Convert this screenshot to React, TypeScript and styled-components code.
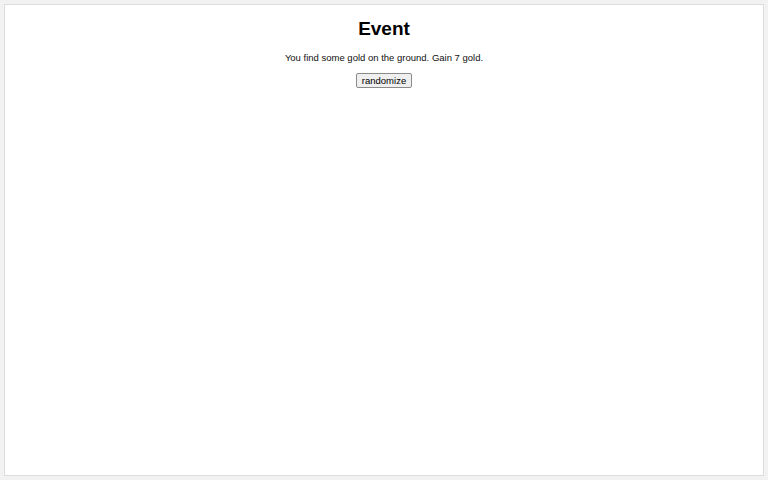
import styled, { createGlobalStyle } from "styled-components";

const GlobalStyle = createGlobalStyle`
  html, body {
    margin: 0;
    padding: 0;
    background: #f2f2f2;
  }
  body {
    font-family: "Liberation Sans", Arial, sans-serif;
  }
`;

const Page = styled.div`
  padding: 4px;
`;

const Card = styled.div`
  height: 472px;
  box-sizing: border-box;
  background: #fff;
  border: 1px solid #dcdcdc;
  display: flex;
  flex-direction: column;
  align-items: center;
  padding-top: 13px;
`;

const Title = styled.h1`
  margin: 0;
  font-size: 19px;
  font-weight: 700;
  color: #000;
  line-height: 22px;
`;

const Message = styled.p`
  margin: 11px 0 0;
  font-size: 9.5px;
  color: #111;
  line-height: 13px;
`;

const Button = styled.button`
  margin-top: 9px;
  font-family: "Liberation Sans", Arial, sans-serif;
  font-size: 9.5px;
  line-height: 11px;
  padding: 1px 4.5px;
  color: #000;
  background: #efefef;
  border: 1px solid #8a8a8a;
  border-radius: 2px;
`;

const App = () => {
  return (
    <Page>
      <GlobalStyle />
      <Card>
        <Title>Event</Title>
        <Message>You find some gold on the ground. Gain 7 gold.</Message>
        <Button>randomize</Button>
      </Card>
    </Page>
  );
};
export default App;
